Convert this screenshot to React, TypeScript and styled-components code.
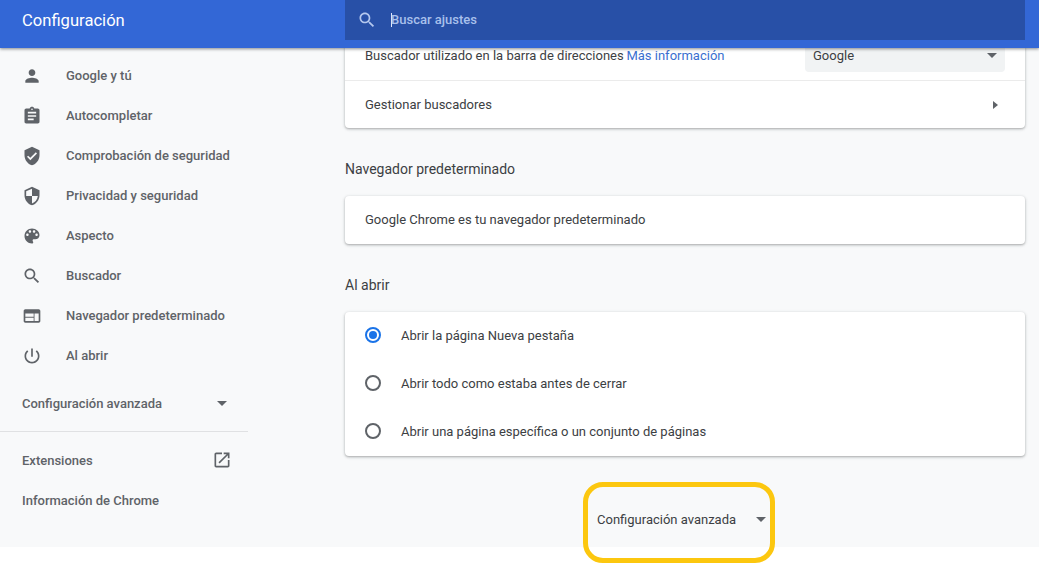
import React from "react";
import styled, { createGlobalStyle } from "styled-components";

const Global = createGlobalStyle`
  html, body { margin: 0; padding: 0; background: #fff; }
  body { font-family: Roboto, "Liberation Sans", sans-serif; }
`;

const Page = styled.div`
  position: relative;
  width: 1039px;
  height: 579px;
  overflow: hidden;
  background: #fff;
`;

const Header = styled.header`
  position: relative;
  z-index: 2;
  display: flex;
  height: 48px;
  background: #3367d6;
  box-shadow: 0 1px 3px rgba(60, 64, 67, 0.6);
`;

const Title = styled.h1`
  width: 345px;
  box-sizing: border-box;
  margin: 0;
  padding: 11px 0 0 22px;
  font-size: 16.6px;
  line-height: 20px;
  font-weight: 400;
  color: #fff;
`;

const SearchBox = styled.div`
  display: flex;
  align-items: center;
  width: 680px;
  height: 40px;
  background: #2850a7;
  color: #a9c0ec;
`;

const SearchIcon = styled.svg`
  width: 20px;
  height: 20px;
  margin-left: 12px;
  fill: #b5c8ee;
`;

const Caret = styled.span`
  width: 1px;
  height: 14px;
  margin-left: 14px;
  background: #e0e8fa;
`;

const SearchText = styled.span`
  margin: -2px 0 0 -1px;
  font-size: 13px;
  font-weight: 500;
  color: #a9c0ec;
`;

const Body = styled.div`
  display: flex;
  height: 499px;
  overflow: hidden;
  background: #f8f9fa;
`;

const Sidebar = styled.nav`
  flex: none;
  width: 248px;
  margin-right: 97px;
  padding-top: 7px;
  font-size: 13px;
  font-weight: 500;
  color: #5f6368;
`;

const NavItem = styled.div`
  display: flex;
  align-items: center;
  height: 40px;
`;

const NavIcon = styled.svg`
  flex: none;
  width: 20px;
  height: 20px;
  margin: 2px 24px 0 22px;
  fill: #5f6368;
`;

const SideRow = styled.div`
  display: flex;
  align-items: center;
  justify-content: space-between;
  height: 40px;
  padding: 0 16px 0 22px;
`;

const AdvancedRow = styled(SideRow)`
  margin-top: 8px;
`;

const SmallIcon = styled.svg`
  width: 20px;
  height: 20px;
  fill: #5f6368;
`;

const Arrow = styled.span<{ $inset?: number }>`
  width: 0;
  height: 0;
  margin-right: ${(p) => p.$inset ?? 4}px;
  border-left: 5px solid transparent;
  border-right: 5px solid transparent;
  border-top: 5px solid #5f6368;
`;

const Divider = styled.div`
  height: 1px;
  margin: 8px 0;
  background: #e0e1e3;
`;

const Main = styled.main`
  display: flex;
  flex-direction: column;
  width: 680px;
  margin-top: -17px;
  color: #3c4043;
  font-size: 13px;
`;

const Card = styled.section`
  border-radius: 4px;
  background: #fff;
  box-shadow: 0 1px 2px rgba(60, 64, 67, 0.3), 0 1px 3px 1px rgba(60, 64, 67, 0.12);
`;

const Row = styled.div<{ $line?: boolean }>`
  display: flex;
  align-items: center;
  justify-content: space-between;
  height: 48px;
  padding: 0 20px;
  border-top: ${(p) => (p.$line ? "1px solid #ebebeb" : "none")};
  box-sizing: border-box;
`;

const FirstRow = styled(Row)`
  height: 49px;
`;

const Link = styled.a`
  margin-left: -0.5px;
  color: #3a6fd0;
`;

const Select = styled.div`
  display: flex;
  align-items: center;
  justify-content: space-between;
  width: 200px;
  height: 32px;
  box-sizing: border-box;
  padding: 0 8px;
  border-radius: 4px;
  background: #f1f3f4;
`;

const RightArrow = styled.span`
  width: 0;
  height: 0;
  margin-right: 7px;
  border-top: 4px solid transparent;
  border-bottom: 4px solid transparent;
  border-left: 5px solid #5f6368;
`;

const SectionTitle = styled.h2`
  margin: 31px 0 17px;
  font-size: 14px;
  line-height: 20px;
  font-weight: 400;
  color: #3c4043;
`;

const SingleRow = styled(Row)`
  padding-bottom: 2px;
`;

const RadioRow = styled.label`
  display: flex;
  align-items: center;
  height: 48px;
  box-sizing: border-box;
  padding: 0 0 2px 20px;
`;

const Radio = styled.span<{ $on?: boolean }>`
  position: relative;
  box-sizing: border-box;
  width: 16px;
  height: 16px;
  margin-right: 20px;
  border: 2px solid ${(p) => (p.$on ? "#1a73e8" : "#5f6368")};
  border-radius: 50%;
  &::after {
    content: "";
    display: ${(p) => (p.$on ? "block" : "none")};
    position: absolute;
    inset: 2px;
    border-radius: 50%;
    background: #1a73e8;
  }
`;

const Advanced = styled.div`
  display: flex;
  align-items: center;
  justify-content: space-between;
  box-sizing: border-box;
  width: 175px;
  height: 40px;
  margin: 43px 0 0 250px;
  padding-left: 2px;
`;

const Ring = styled.div`
  position: absolute;
  left: 583px;
  top: 482px;
  width: 192px;
  height: 81px;
  box-sizing: border-box;
  border: 5px solid #fcc70f;
  border-radius: 20px;
  pointer-events: none;
`;

const nav: [string, string][] = [
  ["Google y tú", "M12 12c2.21 0 4-1.79 4-4s-1.79-4-4-4-4 1.79-4 4 1.79 4 4 4zm0 2c-2.67 0-8 1.34-8 4v2h16v-2c0-2.66-5.33-4-8-4z"],
  ["Autocompletar", "M19 3h-4.18C14.4 1.84 13.3 1 12 1c-1.3 0-2.4.84-2.82 2H5c-1.1 0-2 .9-2 2v14c0 1.1.9 2 2 2h14c1.1 0 2-.9 2-2V5c0-1.1-.9-2-2-2zm-7 0c.55 0 1 .45 1 1s-.45 1-1 1-1-.45-1-1 .45-1 1-1zm2 14H7v-2h7v2zm3-4H7v-2h10v2zm0-4H7V7h10v2z"],
  ["Comprobación de seguridad", "M12 1L3 5v6c0 5.55 3.84 10.74 9 12 5.16-1.26 9-6.45 9-12V5l-9-4zm-2 16l-4-4 1.41-1.41L10 14.17l6.59-6.59L18 9l-8 8z"],
  ["Privacidad y seguridad", "M12 1L3 5v6c0 5.55 3.84 10.74 9 12 5.16-1.26 9-6.45 9-12V5l-9-4zm0 10.99h7c-.53 4.12-3.28 7.79-7 8.94V12H5V6.3l7-3.11v8.8z"],
  ["Aspecto", "M12 3c-4.97 0-9 4.03-9 9s4.03 9 9 9c.83 0 1.5-.67 1.5-1.5 0-.39-.15-.74-.39-1.01-.23-.26-.38-.61-.38-.99 0-.83.67-1.5 1.5-1.5H16c2.76 0 5-2.24 5-5 0-4.42-4.03-8-9-8zm-5.5 9c-.83 0-1.5-.67-1.5-1.5S5.67 9 6.5 9 8 9.67 8 10.5 7.33 12 6.5 12zm3-4C8.67 8 8 7.33 8 6.5S8.67 5 9.5 5s1.5.67 1.5 1.5S10.33 8 9.5 8zm5 0c-.83 0-1.5-.67-1.5-1.5S13.67 5 14.5 5s1.5.67 1.5 1.5S15.33 8 14.5 8zm3 4c-.83 0-1.5-.67-1.5-1.5S16.67 9 17.5 9s1.5.67 1.5 1.5-.67 1.5-1.5 1.5z"],
  ["Buscador", "M15.5 14h-.79l-.28-.27C15.41 12.59 16 11.11 16 9.5 16 5.91 13.09 3 9.5 3S3 5.91 3 9.5 5.91 16 9.5 16c1.61 0 3.09-.59 4.23-1.57l.27.28v.79l5 4.99L20.49 19l-4.99-5zm-6 0C7.01 14 5 11.99 5 9.5S7.01 5 9.5 5 14 7.01 14 9.5 11.99 14 9.5 14z"],
  ["Navegador predeterminado", "M20 4H4c-1.11 0-2 .9-2 2v12c0 1.1.89 2 2 2h16c1.1 0 2-.9 2-2V6c0-1.1-.9-2-2-2zM4 18v-4h10v4H4zm0-5V9h10v4H4zm16 5h-5V9h5v9z"],
  ["Al abrir", "M13 3h-2v10h2V3zm4.83 2.17l-1.42 1.42C17.99 7.86 19 9.81 19 12c0 3.87-3.13 7-7 7s-7-3.13-7-7c0-2.19 1.01-4.14 2.58-5.42L6.17 5.17C4.23 6.82 3 9.26 3 12c0 4.97 4.03 9 9 9s9-4.03 9-9c0-2.74-1.23-5.18-3.17-6.83z"],
];

const searchPath = nav[5][1];
const openPath = "M19 19H5V5h7V3H5c-1.11 0-2 .9-2 2v14c0 1.1.89 2 2 2h14c1.1 0 2-.9 2-2v-7h-2v7zM14 3v2h3.59l-9.83 9.83 1.41 1.41L19 6.41V10h2V3h-7z";

const startup = [
  "Abrir la página Nueva pestaña",
  "Abrir todo como estaba antes de cerrar",
  "Abrir una página específica o un conjunto de páginas",
];

export default function App() {
  return (
    <Page>
      <Global />
      <Header>
        <Title>Configuración</Title>
        <SearchBox>
          <SearchIcon viewBox="0 0 24 24"><path d={searchPath} /></SearchIcon>
          <Caret />
          <SearchText>Buscar ajustes</SearchText>
        </SearchBox>
      </Header>
      <Body>
        <Sidebar>
          {nav.map(([label, d]) => (
            <NavItem key={label}>
              <NavIcon viewBox="0 0 24 24"><path d={d} /></NavIcon>
              {label}
            </NavItem>
          ))}
          <AdvancedRow>
            Configuración avanzada
            <Arrow $inset={5} />
          </AdvancedRow>
          <Divider />
          <SideRow>
            Extensiones
            <SmallIcon viewBox="0 0 24 24"><path d={openPath} /></SmallIcon>
          </SideRow>
          <SideRow>Información de Chrome</SideRow>
        </Sidebar>
        <Main>
          <Card>
            <FirstRow>
              <span>
                Buscador utilizado en la barra de direcciones <Link>Más información</Link>
              </span>
              <Select>
                Google
                <Arrow $inset={0} />
              </Select>
            </FirstRow>
            <Row $line>
              Gestionar buscadores
              <RightArrow />
            </Row>
          </Card>
          <SectionTitle>Navegador predeterminado</SectionTitle>
          <Card>
            <SingleRow>Google Chrome es tu navegador predeterminado</SingleRow>
          </Card>
          <SectionTitle>Al abrir</SectionTitle>
          <Card>
            {startup.map((label, i) => (
              <RadioRow key={label}>
                <Radio $on={i === 0} />
                {label}
              </RadioRow>
            ))}
          </Card>
          <Advanced>
            Configuración avanzada
            <Arrow />
          </Advanced>
        </Main>
      </Body>
      <Ring />
    </Page>
  );
}
